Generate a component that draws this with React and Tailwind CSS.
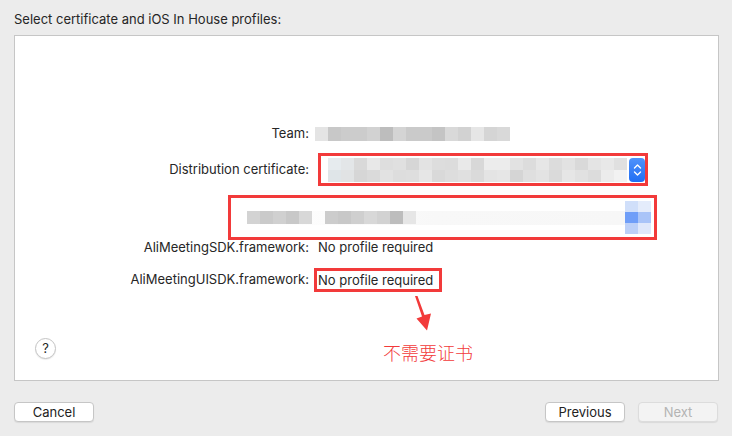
import React from 'react';

// Pixelated (redacted) values shown in the screenshot
const teamBlur = ['#e4e4e4', '#c8c8c8', '#cccccc', '#cccccc', '#d2d2d2', '#bdbdbd', '#d4d4d4', '#cacaca', '#cacaca', '#c4c4c4', '#d9d9d9', '#d2d2d2', '#e6e6e6', '#d5d5d5', '#d9d9d9'];
const certTop = ['#e6ebee', '#e3e6e8', '#d9d9d9', '#e8e8e8', '#dedede', '#e0e0e0', '#d6d6d6', '#e3e3e3', '#dddddd', '#dcdcdc', '#e9e9e9', '#d8d8d8', '#ececec', '#ececec', '#e2e2e2', '#dcdcdc', '#e6e6e6', '#dcdcdc', '#e2e2e2', '#d9d9d9', '#e4e4e4', '#e8e8e8', '#e0e0e0'];
const certBottom = ['#dfe5e8', '#e1e3e4', '#d6d6d6', '#dadada', '#e2e2e2', '#dddddd', '#dedede', '#e6e6e6', '#d9d9d9', '#dddddd', '#e0e0e0', '#dadada', '#e4e4e4', '#e6e6e6', '#d5d5d5', '#dfdfdf', '#e3e3e3', '#dadada', '#e6e6e6', '#e1e1e1', '#dcdcdc', '#ececec', '#f2f2f2'];
const profileA = ['#d3d3d3', '#cacaca', '#d0d0d0', '#c8c8c8', '#d8d8d8'];
const profileB = ['#cccccc', '#c8c8c8', '#cfcfcf', '#d8d8d8', '#d2d2d2', '#bdbdbd', '#e6e6e6'];
const blueBlur = [
  ['#d0dffa', '#e4ecfb'],
  ['#6f9ef8', '#a9c4f8'],
  ['#bcd0f8', '#dfe8fb'],
];

const Blocks = ({ colors, h = 'h-[13px]' }) => (
  <div className="flex">
    {colors.map((c, i) => (
      <div key={i} className={`w-[13px] ${h}`} style={{ backgroundColor: c }} />
    ))}
  </div>
);

const MacButton = ({ children, disabled }) => (
  <button
    className={`w-[80px] h-[20px] rounded-[4px] border text-[13px] leading-[18px] shadow-[0_1px_1px_rgba(0,0,0,0.08)] ${
      disabled ? 'bg-[#f3f3f3] border-[#dcdcdc] text-[#b4b4b4]' : 'bg-white border-[#c6c6c6] text-[#222]'
    }`}
  >
    {children}
  </button>
);

const App = () => {
  return (
    <div className="w-[732px] h-[436px] bg-[#ececec] text-[13px] text-[#262626] font-['Inter','Liberation_Sans',Arial,sans-serif] flex flex-col">
      {/* Title */}
      <div className="px-[14px] pt-[11px] h-[35px] leading-[16px]">Select certificate and iOS In House profiles:</div>

      {/* Main panel */}
      <div className="mx-[14px] w-[705px] h-[346px] bg-white border border-[#c6c6c6] flex flex-col">
        <div className="h-[90px]" />

        {/* Team */}
        <div className="flex items-center h-[16px]">
          <div className="w-[294px] text-right">Team:</div>
          <div className="ml-[6px]">
            <Blocks colors={teamBlur} h="h-[14px]" />
          </div>
        </div>

        {/* Distribution certificate */}
        <div className="flex items-center h-[33px] mt-[11px]">
          <div className="w-[294px] text-right">Distribution certificate:</div>
          <div className="ml-[9px] w-[330px] h-[33px] border-[3px] border-[#f23a3a] flex items-center pl-[4px]">
            <div className="flex-1 h-[25px] flex items-center bg-white rounded-[4px]">
              <div className="pl-[3px] flex flex-col">
                <Blocks colors={certTop} h="h-[12px]" />
                <Blocks colors={certBottom} h="h-[12px]" />
              </div>
              <div className="ml-[2px] w-[16px] h-[24px] rounded-[4px] bg-gradient-to-b from-[#4f92fb] to-[#1f6ef3] flex items-center justify-center">
                <svg width="9" height="16" viewBox="0 0 9 16" fill="none" stroke="white" strokeWidth="1.4" strokeLinecap="round" strokeLinejoin="round">
                  <path d="M1.5 6 L4.5 3 L7.5 6" />
                  <path d="M1.5 10 L4.5 13 L7.5 10" />
                </svg>
              </div>
            </div>
          </div>
        </div>

        {/* Provisioning profile (redacted) */}
        <div className="ml-[213px] mt-[9px] w-[429px] h-[45px] border-[3px] border-[#f23a3a] flex items-center">
          <div className="ml-[16px] flex items-center flex-1 h-[14px] bg-gradient-to-r from-white via-[#f8f8f8] to-[#f7f7f7]">
            <Blocks colors={profileA} />
            <div className="w-[13px]" />
            <Blocks colors={profileB} />
          </div>
          <div className="mr-[3px] flex flex-col">
            {blueBlur.map((row, i) => (
              <Blocks key={i} colors={row} h="h-[11px]" />
            ))}
          </div>
        </div>

        {/* AliMeetingSDK */}
        <div className="flex items-center h-[14px] mt-[1px]">
          <div className="w-[294px] text-right">AliMeetingSDK.framework:</div>
          <div className="ml-[9px]">No profile required</div>
        </div>

        {/* AliMeetingUISDK */}
        <div className="flex items-center h-[24px] mt-[13px]">
          <div className="w-[294px] text-right">AliMeetingUISDK.framework:</div>
          <div className="ml-[5px] h-[24px] w-[128px] border-[3px] border-[#f23a3a] flex items-center pl-[1px] leading-[16px]">
            No profile required
          </div>
        </div>

        {/* Annotation arrow */}
        <div className="ml-[399px] mt-[4px] h-[36px]">
          <svg width="20" height="36" viewBox="0 0 20 36">
            <path d="M1 0 L3.5 0 L10.5 19 L17 17.5 L13 34.5 L2.5 22.5 L8 20.5 Z" fill="#f23a3a" />
          </svg>
        </div>

        {/* Help + annotation text */}
        <div className="flex items-start mt-[3px]">
          <div className="ml-[20px] mt-[3px] w-[21px] h-[21px] rounded-full border border-[#c4c4c4] bg-white shadow-[0_1px_1px_rgba(0,0,0,0.08)] flex items-center justify-center text-[13px] leading-none">
            ?
          </div>
          <div className="ml-[327px] mt-[7px] text-[18px] leading-[20px] text-[#f23a3a] font-['Noto_Sans_CJK_SC',sans-serif] font-light">
            不需要证书
          </div>
        </div>
      </div>

      {/* Footer buttons */}
      <div className="flex items-center px-[14px] mt-[21px]">
        <MacButton>Cancel</MacButton>
        <div className="flex-1" />
        <MacButton>Previous</MacButton>
        <div className="w-[13px]" />
        <MacButton disabled>Next</MacButton>
      </div>
    </div>
  );
};

export default App;
